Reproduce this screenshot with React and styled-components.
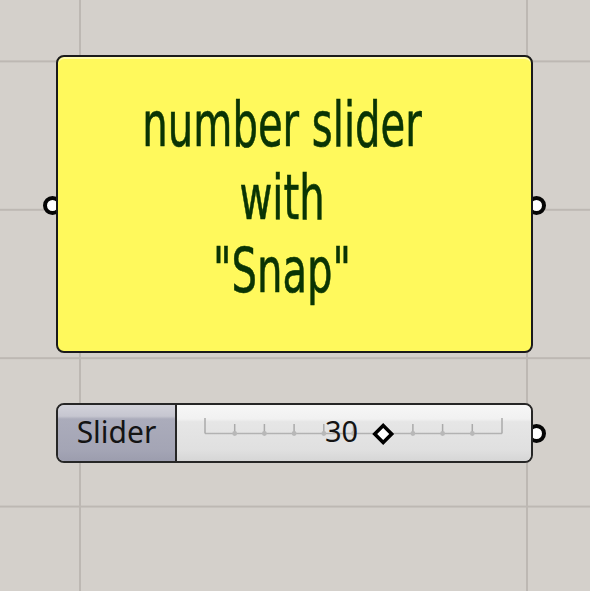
import React from "react";
import styled, { createGlobalStyle } from "styled-components";

const GlobalStyle = createGlobalStyle`
  html, body {
    margin: 0;
    padding: 0;
    background: #d4d0cb;
  }
`;

const Canvas = styled.div`
  width: 590px;
  height: 591px;
  box-sizing: border-box;
  padding: 55px 0 0 56px;
  display: flex;
  flex-direction: column;
  gap: 50px;
  background-color: #d4d0cb;
  background-image:
    linear-gradient(to right, #bdb8b3 2px, transparent 2px),
    linear-gradient(to bottom, #bdb8b3 2px, transparent 2px);
  background-size: 447px 100%, 100% 148.4px;
  background-position: 79px 0, 0 -88px;
  background-repeat: repeat-x, repeat-y;
  overflow: hidden;
`;

const Node = styled.div`
  position: relative;
  width: 477px;
  height: ${({ $height }) => $height}px;
`;

const Port = styled.div`
  position: absolute;
  top: ${({ $y }) => $y}px;
  ${({ $side }) => ($side === "left" ? "left: -13px;" : "right: -13px;")}
  width: 19px;
  height: 19px;
  box-sizing: border-box;
  border: 4.5px solid #050505;
  border-radius: 50%;
  background: #ffffff;
`;

const Panel = styled.div`
  position: relative;
  z-index: 1;
  height: 100%;
  box-sizing: border-box;
  border: 2.5px solid #1a1a1a;
  border-radius: 8px;
  background: #fff95c;
  box-shadow: inset 0 2px 0 #fffcae;
  display: flex;
  flex-direction: column;
  align-items: center;
  justify-content: center;
  padding: 0 24px 14px 0;
`;

const Caption = styled.div`
  font-family: "DejaVu Sans Condensed", "DejaVu Sans", sans-serif;
  font-stretch: condensed;
  font-size: 62px;
  line-height: 73px;
  color: #0a3404;
  -webkit-text-stroke: 0.6px #0a3404;
  text-align: center;
  white-space: nowrap;
  transform: scaleX(0.72);
`;

const Slider = styled.div`
  position: relative;
  z-index: 1;
  height: 100%;
  box-sizing: border-box;
  border: 2.5px solid #262626;
  border-radius: 8px;
  overflow: hidden;
  display: flex;
`;

const Label = styled.div`
  width: 117px;
  flex: none;
  border-right: 2.5px solid #262626;
  background: linear-gradient(
    to bottom,
    #d2d2da 0%,
    #c6c6d0 20%,
    #abacbb 25%,
    #a4a5b5 80%,
    #9c9dae 100%
  );
  display: flex;
  align-items: center;
  justify-content: center;
  font-family: "Noto Sans", "Open Sans", sans-serif;
  font-size: 30px;
  color: #141414;
  padding-bottom: 3px;
`;

const Body = styled.div`
  position: relative;
  flex: 1;
  background: linear-gradient(
    to bottom,
    #f7f7f7 0%,
    #f1f1f1 25%,
    #e6e6e6 30%,
    #e0e0e0 80%,
    #d6d6d6 100%
  );
`;

const Track = styled.svg`
  position: absolute;
  left: 0;
  top: 0;
`;

const Value = styled.div`
  position: absolute;
  left: 146px;
  top: 8px;
  padding: 0 2px;
  font-family: "Noto Sans", "Open Sans", sans-serif;
  font-size: 29px;
  line-height: 36px;
  color: #141414;
`;

const ticks = Array.from({ length: 11 }, (_, i) => 28 + i * 29.7);

export default function App() {
  return (
    <>
      <GlobalStyle />
      <Canvas>
        <Node $height={298}>
          <Port $side="left" $y={141} />
          <Port $side="right" $y={141} />
          <Panel>
            <Caption>
              number slider
              <br />
              with
              <br />
              "Snap"
            </Caption>
          </Panel>
        </Node>
        <Node $height={60}>
          <Port $side="right" $y={21} />
          <Slider>
            <Label>Slider</Label>
            <Body>
              <Track width="357" height="56" viewBox="0 0 357 56">
                <line x1={ticks[0]} y1="28.5" x2={ticks[10]} y2="28.5" stroke="#b2b2b2" strokeWidth="1.5" />
                {ticks.map((x, i) => {
                  const end = i === 0 || i === 10;
                  return (
                    <g key={i}>
                      <line x1={x} y1={end ? 13 : 19} x2={x} y2="28.5" stroke="#aaaaaa" strokeWidth="1.5" />
                      {!end && <circle cx={x} cy="28.5" r="2.4" fill="#b8b8b8" />}
                    </g>
                  );
                })}
                <rect
                  x={ticks[6] - 6}
                  y={29 - 6}
                  width="12"
                  height="12"
                  transform={`rotate(45 ${ticks[6]} 29)`}
                  fill="#ffffff"
                  stroke="#000000"
                  strokeWidth="3.5"
                />
              </Track>
              <Value>30</Value>
            </Body>
          </Slider>
        </Node>
      </Canvas>
    </>
  );
}
